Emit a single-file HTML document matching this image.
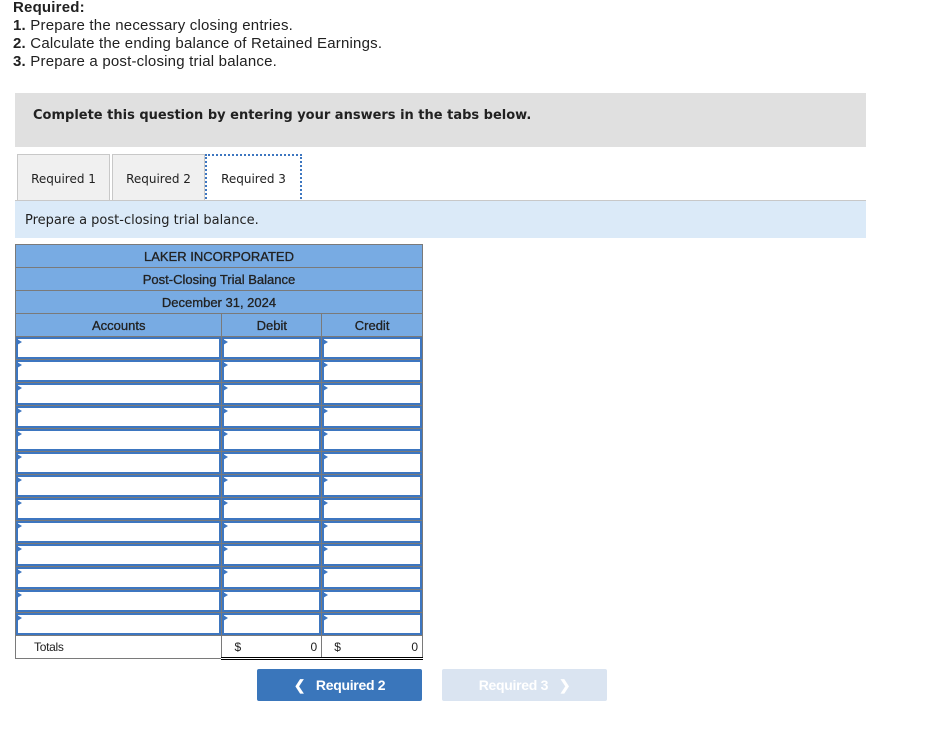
<!DOCTYPE html>
<html><head><style>
body{margin:0;width:948px;height:729px;background:#fff;font-family:"Liberation Sans",Arial,sans-serif;position:relative;color:#212121;overflow:hidden}
.abs{position:absolute}
.req{left:13px;top:-1px;font-size:15px;line-height:18px;letter-spacing:0.2px}
.gray{left:15px;top:93px;width:851px;height:54px;background:#e0e0e0;font-family:"DejaVu Sans",sans-serif;font-weight:bold;font-size:13px;}
.tab{top:154px;height:46px;border:1px solid #c8c8c8;border-bottom:none;background:#f0f0f0;font-family:"DejaVu Sans",sans-serif;font-size:12px;line-height:48px;text-align:center;box-sizing:border-box}
.hr{left:15px;top:200px;width:851px;height:1px;background:#c8c8c8}
.blue{left:15px;top:201px;width:851px;height:37px;background:#dbeaf8;font-family:"DejaVu Sans",sans-serif;font-size:13px;line-height:40px;padding-left:10px;box-sizing:border-box}
table{position:absolute;left:15px;top:244px;border-collapse:collapse;width:408px;font-size:13px}
td{border:1px solid #7a7a7a;padding:0;height:22px;box-sizing:border-box}
th{border:1px solid #7a7a7a;background:#78abe3;font-weight:normal;font-size:13px;color:#222;height:23px;box-sizing:border-box;padding:0;-webkit-text-stroke:0.3px #222}
td.i{position:relative;border:1px solid #7a7a7a;box-shadow:inset 0 0 0 2px #3d76c0;background:#fff}
td.i:before{content:"";position:absolute;left:1px;top:2px;border-left:5px solid #3d76c0;border-top:3px solid transparent;border-bottom:3px solid transparent}
.btn{top:669px;height:32px;font-weight:bold;font-size:14px;line-height:32px;text-align:center;border-radius:2px;letter-spacing:-0.3px}
</style></head><body>
<div class="abs req"><b>Required:</b><br><b>1.</b> Prepare the necessary closing entries.<br><b>2.</b> Calculate the ending balance of Retained Earnings.<br><b>3.</b> Prepare a post-closing trial balance.</div>
<div class="abs gray"><div style="position:absolute;left:18px;top:15px">Complete this question by entering your answers in the tabs below.</div></div>
<div class="abs tab" style="left:17px;width:93px">Required 1</div>
<div class="abs tab" style="left:112px;width:93px">Required 2</div>
<div class="abs tab" style="left:205px;width:97px;background:#fff;border:2px dotted #3d76c0;height:49px;line-height:46px">Required 3</div>
<div class="abs hr"></div>
<div class="abs blue">Prepare a post-closing trial balance.</div>
<table>
<colgroup><col style="width:207px"><col style="width:100px"><col style="width:101px"></colgroup>
<tr><th colspan="3">LAKER INCORPORATED</th></tr>
<tr><th colspan="3">Post-Closing Trial Balance</th></tr>
<tr><th colspan="3">December 31, 2024</th></tr>
<tr><th>Accounts</th><th>Debit</th><th>Credit</th></tr>
<tr><td class="i" style="height:23px"></td><td class="i"></td><td class="i"></td></tr>
<tr><td class="i" style="height:23px"></td><td class="i"></td><td class="i"></td></tr>
<tr><td class="i" style="height:23px"></td><td class="i"></td><td class="i"></td></tr>
<tr><td class="i" style="height:23px"></td><td class="i"></td><td class="i"></td></tr>
<tr><td class="i" style="height:23px"></td><td class="i"></td><td class="i"></td></tr>
<tr><td class="i" style="height:23px"></td><td class="i"></td><td class="i"></td></tr>
<tr><td class="i" style="height:23px"></td><td class="i"></td><td class="i"></td></tr>
<tr><td class="i" style="height:23px"></td><td class="i"></td><td class="i"></td></tr>
<tr><td class="i" style="height:23px"></td><td class="i"></td><td class="i"></td></tr>
<tr><td class="i" style="height:23px"></td><td class="i"></td><td class="i"></td></tr>
<tr><td class="i" style="height:23px"></td><td class="i"></td><td class="i"></td></tr>
<tr><td class="i" style="height:23px"></td><td class="i"></td><td class="i"></td></tr>
<tr><td class="i" style="height:23px"></td><td class="i"></td><td class="i"></td></tr>
<tr><td style="height:23px;padding-left:18px;font-size:12px;letter-spacing:-0.3px">Totals</td>
<td style="border-bottom:3px double #000;font-size:12px;padding:0 4px 0 12px"><span>$</span><span style="float:right">0</span></td>
<td style="border-bottom:3px double #000;font-size:12px;padding:0 4px 0 12px"><span>$</span><span style="float:right">0</span></td></tr>
</table>
<div class="abs btn" style="left:257px;width:165px;background:#3a76bb;color:#fff">&#10094;&nbsp;&nbsp; Required 2</div>
<div class="abs btn" style="left:442px;width:165px;background:#dae4f1;color:#fff">Required 3 &nbsp;&nbsp;&#10095;</div>
</body></html>
